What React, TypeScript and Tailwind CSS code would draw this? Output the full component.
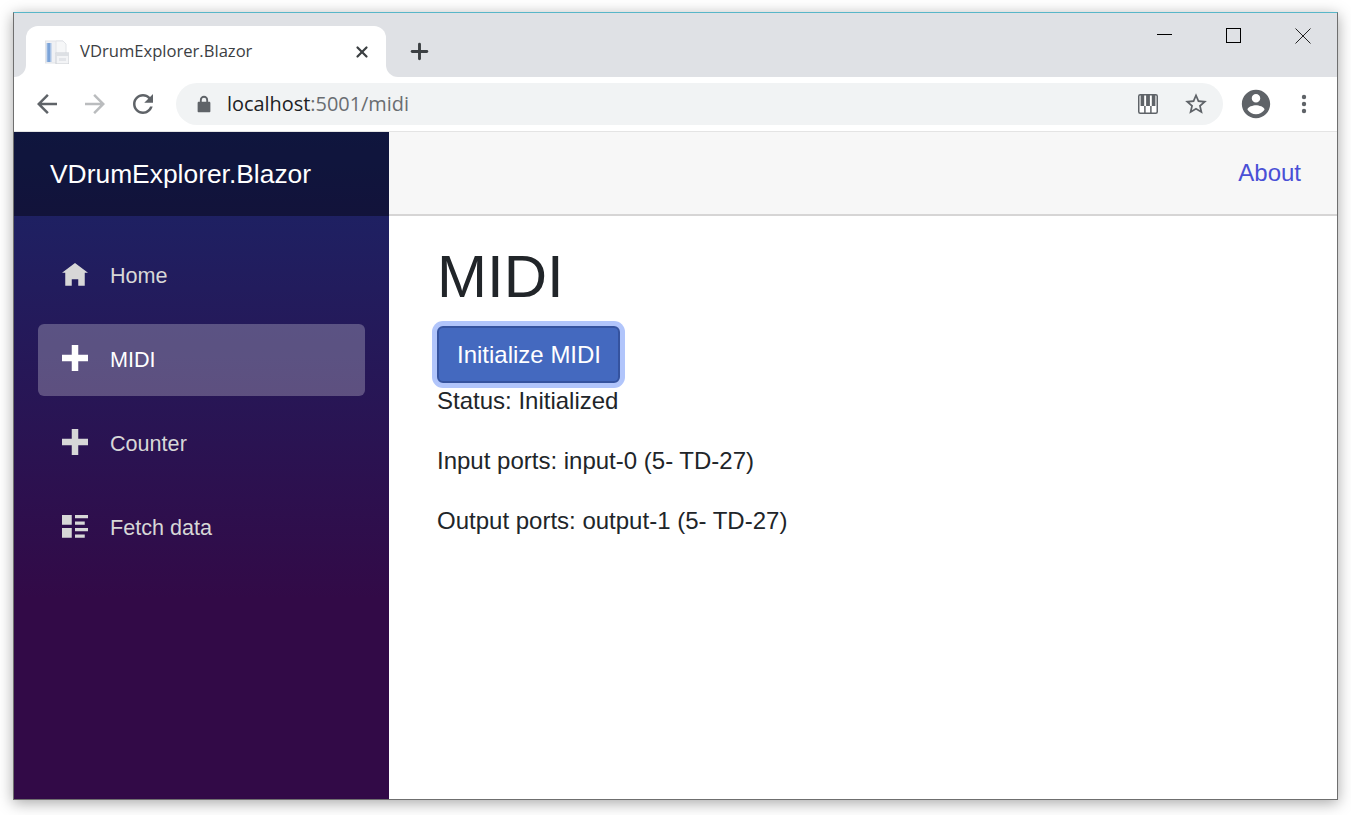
import { X, Plus } from 'lucide-react'

const SANS = "font-['Liberation_Sans',Arial,sans-serif]"
const PLUS = 'M3 0v3h-3v2h3v3h2v-3h3v-2h-3v-3h-2z'

function NavItem({ label, d, active, raised }: { label: string; d: string; active?: boolean; raised?: boolean }) {
  return (
    <a
      className={
        active
          ? 'flex items-center h-[72px] px-6 rounded-[6px] bg-white/25 text-white'
          : 'flex items-center h-[72px] px-6 rounded-[6px] text-[#d7d7d7]'
      }
    >
      <svg
        viewBox="0 0 8 8"
        className={
          raised
            ? 'w-[26px] h-[26px] mr-[22px] mb-[5px] fill-current'
            : 'w-[26px] h-[26px] mr-[22px] fill-current'
        }
      >
        <path d={d} />
      </svg>
      <span className="text-[21.6px]">{label}</span>
    </a>
  )
}

function Favicon() {
  return (
    <svg viewBox="0 0 24 24" className="w-6 h-6 mr-[11px]">
      <rect x="0.5" y="1" width="17" height="22" fill="#f0f1f4" stroke="#e2e4e8" />
      <rect x="1.5" y="3" width="5" height="19" fill="#a9c3e6" />
      <rect x="2.500" y="3" width="2.500" height="19" fill="#7ba3d8" />
      <path d="M11 1h7l3 3v10H11z" fill="#f6f7f8" stroke="#e2e4e8" />
      <rect x="11" y="13" width="13" height="11" fill="#f3f4f6" stroke="#ccd0d5" />
      <rect x="11" y="13" width="13" height="3" fill="#dde0e4" />
      <rect x="14" y="18" width="7" height="3" fill="#e3e5e9" />
    </svg>
  )
}

function Tab() {
  return (
    <div className="relative flex items-center w-[360px] h-[51px] pl-[19px] pr-[15px] bg-white rounded-t-[12px]">
      <div className="absolute -left-3 bottom-0 w-3 h-3 bg-white">
        <div className="w-full h-full bg-[#dfe1e5] rounded-br-[12px]" />
      </div>
      <div className="absolute -right-3 bottom-0 w-3 h-3 bg-white">
        <div className="w-full h-full bg-[#dfe1e5] rounded-bl-[12px]" />
      </div>
      <Favicon />
      <span className="flex-1 mb-[1px] text-[16.6px] text-[#3c4043] font-['Open_Sans',sans-serif]">VDrumExplorer.Blazor</span>
      <X className="w-[18px] h-[18px] text-[#3c4043]" strokeWidth={3} />
    </div>
  )
}

function WindowControls() {
  return (
    <div className="flex ml-auto pt-[15px] pr-[26px] gap-[53px] h-[40px]">
      <svg viewBox="0 0 16 16" className="w-4 h-4 stroke-black fill-none">
        <path d="M0 6.500h15" />
      </svg>
      <svg viewBox="0 0 16 16" className="w-4 h-4 stroke-black fill-none">
        <rect x="0.500" y="0.500" width="14" height="14" />
      </svg>
      <svg viewBox="0 0 16 16" className="w-4 h-4 stroke-[#222] fill-none">
        <path d="M0.500 0.500l15 15M15.500 0.500l-15 15" />
      </svg>
    </div>
  )
}

function TitleBar() {
  return (
    <div className="flex h-16 bg-[#dfe1e5] pl-3">
      <div className="flex items-end">
        <Tab />
        <Plus className="w-[25px] h-[25px] mb-[13px] ml-[21px] text-[#3c4043]" strokeWidth={2.8} />
      </div>
      <WindowControls />
    </div>
  )
}

function Toolbar() {
  return (
    <div className="flex items-center h-[55px] bg-white pl-[18px] pr-[21px] border-b-[1px] border-[#e4e4e4]">
      <svg viewBox="0 0 24 24" className="w-[30px] h-[30px] fill-[#5f6368]">
        <path d="M20 11H7.83l5.59-5.59L12 4l-8 8 8 8 1.41-1.41L7.83 13H20v-2z" />
      </svg>
      <svg viewBox="0 0 24 24" className="w-[30px] h-[30px] ml-[18px] fill-[#babcbe]">
        <path d="M4 11h12.17l-5.59-5.59L12 4l8 8-8 8-1.41-1.41L16.17 13H4v-2z" />
      </svg>
      <svg viewBox="0 0 24 24" className="w-[30px] h-[30px] ml-[18px] fill-[#5f6368]">
        <path d="M17.65 6.35C16.2 4.9 14.21 4 12 4c-4.42 0-7.99 3.58-7.99 8s3.57 8 7.99 8c3.73 0 6.84-2.55 7.73-6h-2.08c-.82 2.33-3.04 4-5.65 4-3.31 0-6-2.69-6-6s2.69-6 6-6c1.66 0 3.14.69 4.22 1.78L13 11h7V4l-2.35 2.35z" />
      </svg>
      <div className="flex items-center flex-1 h-[42px] ml-[18px] pl-[19px] pr-[14px] rounded-full bg-[#f1f3f4]">
        <svg viewBox="0 0 24 24" className="w-[18px] h-[18px] fill-[#5f6368]">
          <path d="M19 9h-1.500V6.500a5.500 5.500 0 0 0-11 0V9H5c-.8 0-1.500.7-1.500 1.500v11c0 .8.7 1.500 1.500 1.500h14c.8 0 1.500-.7 1.500-1.500v-11C20.500 9.700 19.800 9 19 9zM9 9V6.500a3 3 0 0 1 6 0V9z" />
        </svg>
        <span className="ml-[14px] text-[19.9px] font-['Open_Sans',sans-serif] text-[#202124]">
          localhost<span className="text-[#6a6d71]">:5001/midi</span>
        </span>
        <svg viewBox="0 0 20 20" className="w-5 h-5 ml-auto">
          <rect x="0.750" y="0.750" width="18.500" height="18.500" rx="1.500" fill="#fff" stroke="#5f6368" strokeWidth="1.500" />
          <path d="M6.900 12v7M12.900 12v7" stroke="#5f6368" strokeWidth="1.500" />
          <path d="M2.600 1h3.600v11H2.600zM8.100 1h3.800v11H8.100zM13.800 1h3.600v11h-3.600z" fill="#5f6368" />
        </svg>
        <svg viewBox="0 0 24 24" className="w-[26px] h-[26px] ml-[25px] fill-[#5f6368]">
          <path d="M22 9.240l-7.190-.62L12 2 9.190 8.630 2 9.240l5.460 4.730L5.820 21 12 17.270 18.180 21l-1.630-7.030L22 9.240zM12 15.400l-3.760 2.270 1-4.280-3.320-2.880 4.380-.38L12 6.100l1.710 4.040 4.380.38-3.320 2.880 1 4.280L12 15.400z" />
        </svg>
      </div>
      <svg viewBox="0 0 24 24" className="w-[34px] h-[34px] ml-4 fill-[#5f6368]">
        <path d="M12 2C6.480 2 2 6.480 2 12s4.480 10 10 10 10-4.480 10-10S17.520 2 12 2zm0 3c1.660 0 3 1.340 3 3s-1.340 3-3 3-3-1.340-3-3 1.340-3 3-3zm0 14.200c-2.500 0-4.710-1.280-6-3.220.03-1.990 4-3.080 6-3.080 1.990 0 5.970 1.090 6 3.080-1.290 1.940-3.500 3.220-6 3.220z" />
      </svg>
      <svg viewBox="0 0 24 24" className="w-[24px] h-[24px] ml-[19px] fill-[#5f6368]">
        <circle cx="12" cy="5" r="2.200" />
        <circle cx="12" cy="12" r="2.200" />
        <circle cx="12" cy="19" r="2.200" />
      </svg>
    </div>
  )
}

function Sidebar() {
  return (
    <div className="w-[375px] shrink-0 bg-[linear-gradient(180deg,#1a2568_0%,#320a47_70%)]">
      <div className="flex items-center h-[84px] pl-9 pt-[2px] bg-black/40 text-white text-[26.4px]">VDrumExplorer.Blazor</div>
      <nav className="flex flex-col gap-3 pt-6 px-6">
        <NavItem label="Home" d="M4 0l-4 3h1v4h2v-2h2v2h2v-4.030l1 .03-4-3z" />
        <NavItem label="MIDI" d={PLUS} active raised />
        <NavItem label="Counter" d={PLUS} raised />
        <NavItem label="Fetch data" d="M0 0v3h3v-3h-3zm4 0v1h4v-1h-4zm0 2v1h3v-1h-3zm-4 2v3h3v-3h-3zm4 0v1h4v-1h-4zm0 2v1h3v-1h-3z" />
      </nav>
    </div>
  )
}

function Main() {
  return (
    <div className="flex-1 bg-white text-[#212529]">
      <div className="flex items-center justify-end h-[84px] pr-9 bg-[#f7f7f7] border-b-2 border-[#d6d5d5] text-[24px] text-[#4a50d6]">
        About
      </div>
      <div className="pt-[25px] px-12 text-[24px] leading-[36px]">
        <h1 className="text-[60px] leading-[72px] mb-[13px]">MIDI</h1>
        <button className="block h-[57px] pl-[18px] pr-[17px] rounded-[6px] border-2 border-[#35539f] bg-[#4469bf] text-white ring-[5px] ring-[#b1c5fb]">
          Initialize MIDI
        </button>
        <p className="mb-6">Status: Initialized</p>
        <p className="mb-6">Input ports: input-0 (5- TD-27)</p>
        <p className="mb-6">Output ports: output-1 (5- TD-27)</p>
      </div>
    </div>
  )
}

export default function App() {
  return (
    <div className={`h-screen bg-white pt-3 pl-[13px] overflow-hidden ${SANS}`}>
      <div className="flex flex-col w-[1325px] h-[788px] border border-t-[#58b6c8] border-x-[#6f6f6f] border-b-[#6f6f6f] shadow-[0_3px_14px_rgba(0,0,0,0.35)]">
        <TitleBar />
        <Toolbar />
        <div className="flex flex-1 min-h-0">
          <Sidebar />
          <Main />
        </div>
      </div>
    </div>
  )
}
